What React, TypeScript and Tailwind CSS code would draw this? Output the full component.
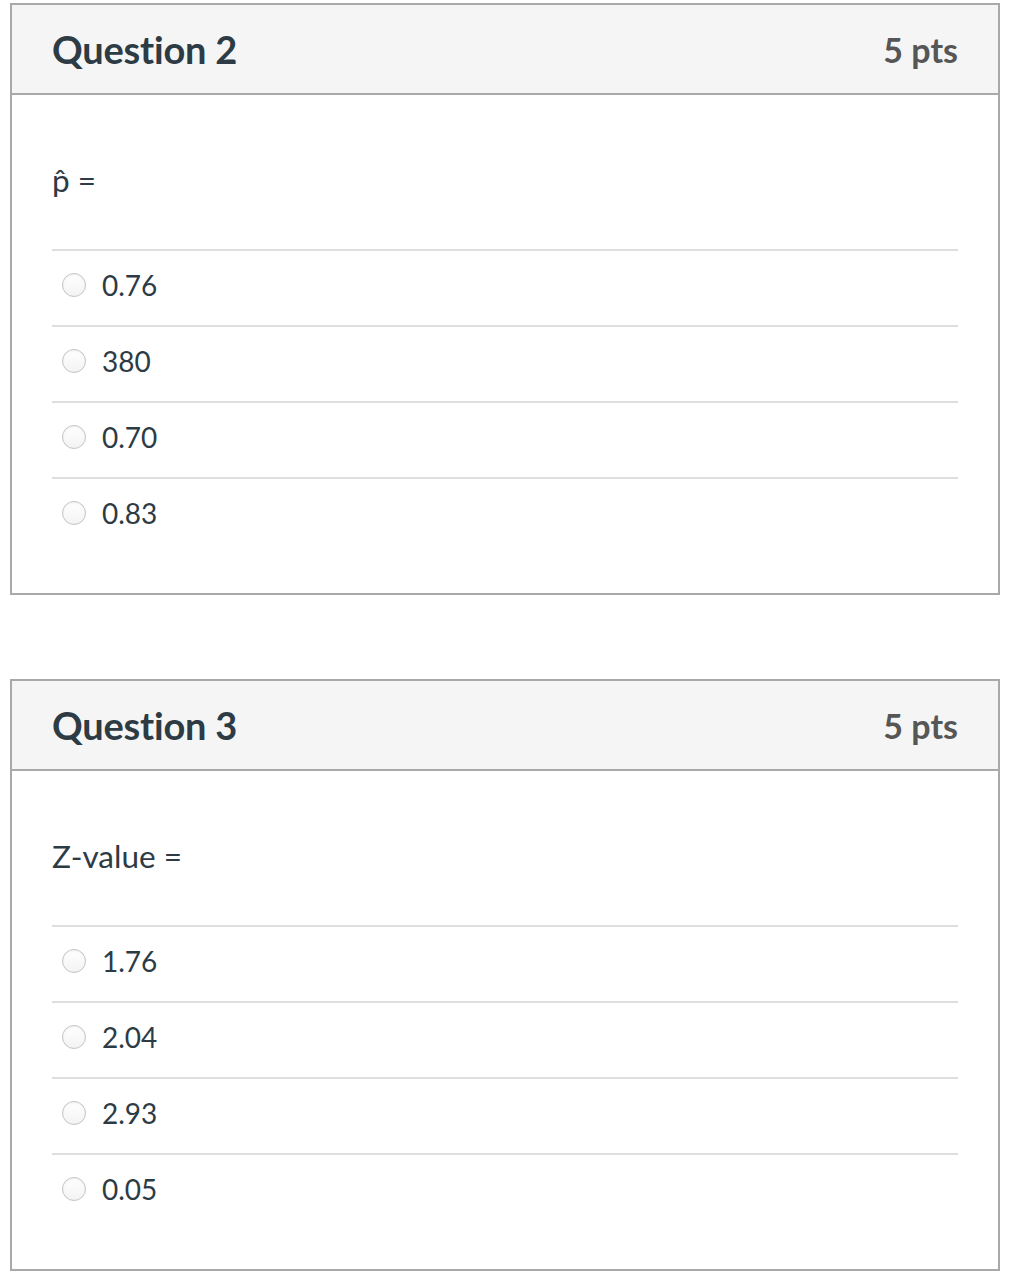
const questions = [
  { title: "Question 2", pts: "5 pts", text: "p̂ =", answers: ["0.76", "380", "0.70", "0.83"] },
  { title: "Question 3", pts: "5 pts", text: "Z-value =", answers: ["1.76", "2.04", "2.93", "0.05"] },
];

const Radio = () => (
  <span className="inline-block w-[24px] h-[24px] rounded-full border border-[#c4c4c4] bg-gradient-to-b from-[#ffffff] to-[#f3f3f3] shadow-[inset_0_1px_2px_rgba(0,0,0,0.06)] shrink-0" />
);

const QuestionCard = ({ q }: { q: (typeof questions)[number] }) => (
  <div className="border-2 border-[#a9a9a9] bg-white">
    <div className="h-[90px] bg-[#f5f5f5] border-b-2 border-[#a9a9a9] flex items-center justify-between px-[40px]">
      <h2 className="text-[38px] font-bold text-[#2d3b45] tracking-[-0.2px]">{q.title}</h2>
      <span className="text-[34px] font-bold text-[#565656]">{q.pts}</span>
    </div>
    <div className="px-[40px] pt-[61px] pb-[40px]">
      <div className="text-[31.5px] leading-[48px] text-[#2d3b45] mb-[45px]">{q.text}</div>
      {q.answers.map((a) => (
        <div key={a} className="border-t-2 border-[#dedede] h-[76px] flex items-center pl-[10px] pb-[6px]">
          <Radio />
          <span className="ml-[16px] text-[28px] text-[#2d3b45]">{a}</span>
        </div>
      ))}
    </div>
  </div>
);

export default function App() {
  return (
    <div className="min-h-[1286px] bg-white pt-[3px] pl-[10px] pr-[26px]" style={{ fontFamily: "Lato, 'Noto Sans', sans-serif" }}>
      <div className="flex flex-col gap-[84px]">
        {questions.map((q) => (
          <QuestionCard key={q.title} q={q} />
        ))}
      </div>
    </div>
  );
}
